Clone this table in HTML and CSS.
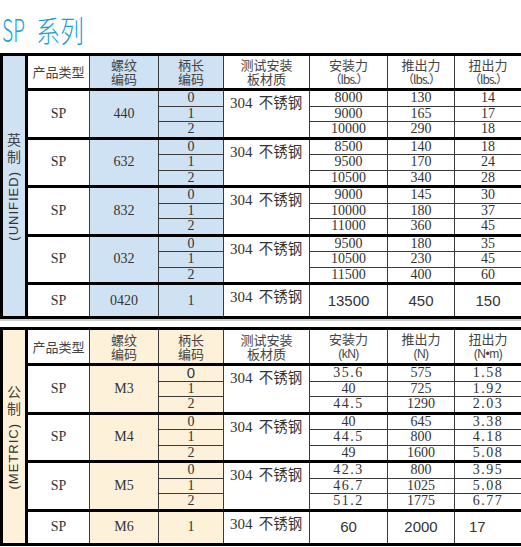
FILE: index.html
```html
<!DOCTYPE html>
<html lang="zh">
<head>
<meta charset="utf-8">
<title>SP 系列</title>
<link rel="stylesheet" href="styles.css">
</head>
<body>
<h1 class="title"><span class="title-en">SP</span><span class="title-cn">系列</span></h1>

<table class="spec unified">
  <colgroup>
    <col class="c-side"><col class="c-type"><col class="c-thread"><col class="c-len"><col class="c-mat"><col class="c-inst"><col class="c-push"><col class="c-torq">
  </colgroup>
  <tr class="head">
    <td class="side" rowspan="14"><div class="side-label"><span class="cn">英<br>制</span><span class="en">(UNIFIED)</span></div></td>
    <td>产品类型</td>
    <td class="tint">螺纹<br>编码</td>
    <td class="tint">柄长<br>编码</td>
    <td>测试安装<br>板材质</td>
    <td>安装力<br><span class="unit">（lbs.）</span></td>
    <td>推出力<br><span class="unit">（lbs.）</span></td>
    <td>扭出力<br><span class="unit">（lbs.）</span></td>
  </tr>
  <tr class="sub first"><td class="mid" rowspan="3">SP</td><td class="mid tint" rowspan="3">440</td><td class="tint">0</td><td class="mat" rowspan="3"><span class="num">304</span> 不锈钢</td><td>8000</td><td>130</td><td>14</td></tr>
  <tr class="sub"><td class="tint">1</td><td>9000</td><td>165</td><td>17</td></tr>
  <tr class="sub"><td class="tint">2</td><td>10000</td><td>290</td><td>18</td></tr>
  <tr class="sub first"><td class="mid" rowspan="3">SP</td><td class="mid tint" rowspan="3">632</td><td class="tint">0</td><td class="mat" rowspan="3"><span class="num">304</span> 不锈钢</td><td>8500</td><td>140</td><td>18</td></tr>
  <tr class="sub"><td class="tint">1</td><td>9500</td><td>170</td><td>24</td></tr>
  <tr class="sub"><td class="tint">2</td><td>10500</td><td>340</td><td>28</td></tr>
  <tr class="sub first"><td class="mid" rowspan="3">SP</td><td class="mid tint" rowspan="3">832</td><td class="tint">0</td><td class="mat" rowspan="3"><span class="num">304</span> 不锈钢</td><td>9000</td><td>145</td><td>30</td></tr>
  <tr class="sub"><td class="tint">1</td><td>10000</td><td>180</td><td>37</td></tr>
  <tr class="sub"><td class="tint">2</td><td>11000</td><td>360</td><td>45</td></tr>
  <tr class="sub first"><td class="mid" rowspan="3">SP</td><td class="mid tint" rowspan="3">032</td><td class="tint">0</td><td class="mat" rowspan="3"><span class="num">304</span> 不锈钢</td><td>9500</td><td>180</td><td>35</td></tr>
  <tr class="sub"><td class="tint">1</td><td>10500</td><td>230</td><td>45</td></tr>
  <tr class="sub"><td class="tint">2</td><td>11500</td><td>400</td><td>60</td></tr>
  <tr class="last first"><td class="mid">SP</td><td class="mid tint">0420</td><td class="mid tint">1</td><td class="mat"><span class="num">304</span> 不锈钢</td><td class="sans">13500</td><td class="sans">450</td><td class="sans">150</td></tr>
</table>

<table class="spec metric">
  <colgroup>
    <col class="c-side"><col class="c-type"><col class="c-thread"><col class="c-len"><col class="c-mat"><col class="c-inst"><col class="c-push"><col class="c-torq">
  </colgroup>
  <tr class="head">
    <td class="side" rowspan="11"><div class="side-label"><span class="cn">公<br>制</span><span class="en">(METRIC)</span></div></td>
    <td>产品类型</td>
    <td class="tint">螺纹<br>编码</td>
    <td class="tint">柄长<br>编码</td>
    <td>测试安装<br>板材质</td>
    <td>安装力<br><span class="unit-s">(kN)</span></td>
    <td>推出力<br><span class="unit-s">(N)</span></td>
    <td>扭出力<br><span class="unit-s">(N•m)</span></td>
  </tr>
  <tr class="sub first"><td class="mid" rowspan="3">SP</td><td class="mid tint" rowspan="3">M3</td><td class="tint sans">0</td><td class="mat" rowspan="3"><span class="num">304</span> 不锈钢</td><td class="dec">35.6</td><td>575</td><td class="dec">1.58</td></tr>
  <tr class="sub"><td class="tint">1</td><td>40</td><td>725</td><td class="dec">1.92</td></tr>
  <tr class="sub"><td class="tint">2</td><td class="dec">44.5</td><td>1290</td><td class="dec">2.03</td></tr>
  <tr class="sub first"><td class="mid" rowspan="3">SP</td><td class="mid tint" rowspan="3">M4</td><td class="tint">0</td><td class="mat" rowspan="3"><span class="num">304</span> 不锈钢</td><td>40</td><td>645</td><td class="dec">3.38</td></tr>
  <tr class="sub"><td class="tint">1</td><td class="dec">44.5</td><td>800</td><td class="dec">4.18</td></tr>
  <tr class="sub"><td class="tint">2</td><td>49</td><td>1600</td><td class="dec">5.08</td></tr>
  <tr class="sub first"><td class="mid" rowspan="3">SP</td><td class="mid tint" rowspan="3">M5</td><td class="tint">0</td><td class="mat" rowspan="3"><span class="num">304</span> 不锈钢</td><td class="dec">42.3</td><td>800</td><td class="dec">3.95</td></tr>
  <tr class="sub"><td class="tint">1</td><td class="dec">46.7</td><td>1025</td><td class="dec">5.08</td></tr>
  <tr class="sub"><td class="tint">2</td><td class="dec">51.2</td><td>1775</td><td class="dec">6.77</td></tr>
  <tr class="last first"><td class="mid">SP</td><td class="mid tint">M6</td><td class="mid tint">1</td><td class="mat"><span class="num">304</span> 不锈钢</td><td class="sans">60</td><td class="sans">2000</td><td class="sans left">17</td></tr>
</table>
</body>
</html>
```

FILE: styles.css
```css
html, body {
  margin: 0;
  padding: 0;
  background: #fff;
}

body {
  width: 521px;
  font-family: "Liberation Serif", "Noto Sans CJK SC", serif;
  color: #333;
}

.title {
  margin: 0;
  height: 53px;
  padding: 4px 0 0 2px;
  box-sizing: border-box;
  display: flex;
  align-items: center;
  font-weight: 300;
  font-size: 30px;
  line-height: 40px;
  color: #1f9dd9;
}

.title-en {
  display: inline-block;
  width: 24px;
  margin-right: 10px;
  font-family: "Noto Sans CJK SC", sans-serif;
  font-weight: 300;
  font-size: 31px;
  transform: scaleX(0.62);
  transform-origin: left center;
}

.title-cn {
  display: inline-block;
  font-family: "Noto Sans CJK SC", sans-serif;
  font-weight: 300;
  font-size: 30px;
  transform: scaleX(0.8);
  transform-origin: left center;
}

.spec {
  width: 521px;
  table-layout: fixed;
  border-collapse: collapse;
  border: 3px solid #000;
  font-size: 14px;
}

.spec.unified {
  margin-bottom: 8px;
  box-shadow: 0 2px 0 #cfcfcf;
}

.c-side { width: 25px; }
.c-type { width: 63px; }
.c-thread { width: 69px; }
.c-len { width: 65px; }
.c-mat { width: 86px; }
.c-inst { width: 78px; }
.c-push { width: 67px; }
.c-torq { width: 68px; }

.spec td {
  border: 1px solid #3a3a3a;
  padding: 0;
  text-align: center;
  vertical-align: middle;
  line-height: 14px;
}

.spec td.side {
  border-right: 3px solid #000;
  padding: 0;
}

.unified .side, .unified .tint { background: #cfe2f3; }
.metric .side, .metric .tint { background: #fdf1da; }

.head td {
  height: 32px;
  font-family: "Noto Sans CJK SC", sans-serif;
  font-size: 13px;
  line-height: 14px;
  color: #444;
}

.metric .head td {
  height: 33px;
}

.unit {
  font-family: "Noto Sans CJK SC", sans-serif;
  font-size: 12px;
  letter-spacing: -1px;
}

.unit-s {
  font-family: "Liberation Sans", sans-serif;
  font-size: 12px;
  letter-spacing: -0.5px;
}

.sub td {
  height: 14.5px;
}

.first td {
  border-top: 3px solid #000;
}

.last td {
  height: 28px;
}

.mat {
  vertical-align: top !important;
  text-align: left !important;
  padding: 3px 0 0 6px !important;
  font-family: "Noto Sans CJK SC", sans-serif;
  font-size: 14.5px;
  line-height: 16px !important;
}

.num {
  font-family: "Liberation Serif", serif;
  font-size: 15px;
  margin-right: 3px;
}

.dec {
  letter-spacing: 1.5px;
}

.sans {
  font-family: "Liberation Sans", sans-serif;
  font-size: 15px;
}

.left {
  text-align: left !important;
  padding-left: 14px !important;
}

.side-label {
  display: flex;
  flex-direction: column;
  align-items: center;
  gap: 6px;
}

.side-label .cn {
  font-family: "Noto Sans CJK SC", sans-serif;
  font-size: 14px;
  line-height: 17px;
  color: #444;
}

.side-label .en {
  writing-mode: vertical-rl;
  transform: rotate(180deg);
  font-family: "Liberation Sans", sans-serif;
  font-size: 13px;
  letter-spacing: 1px;
  color: #333;
}
```
